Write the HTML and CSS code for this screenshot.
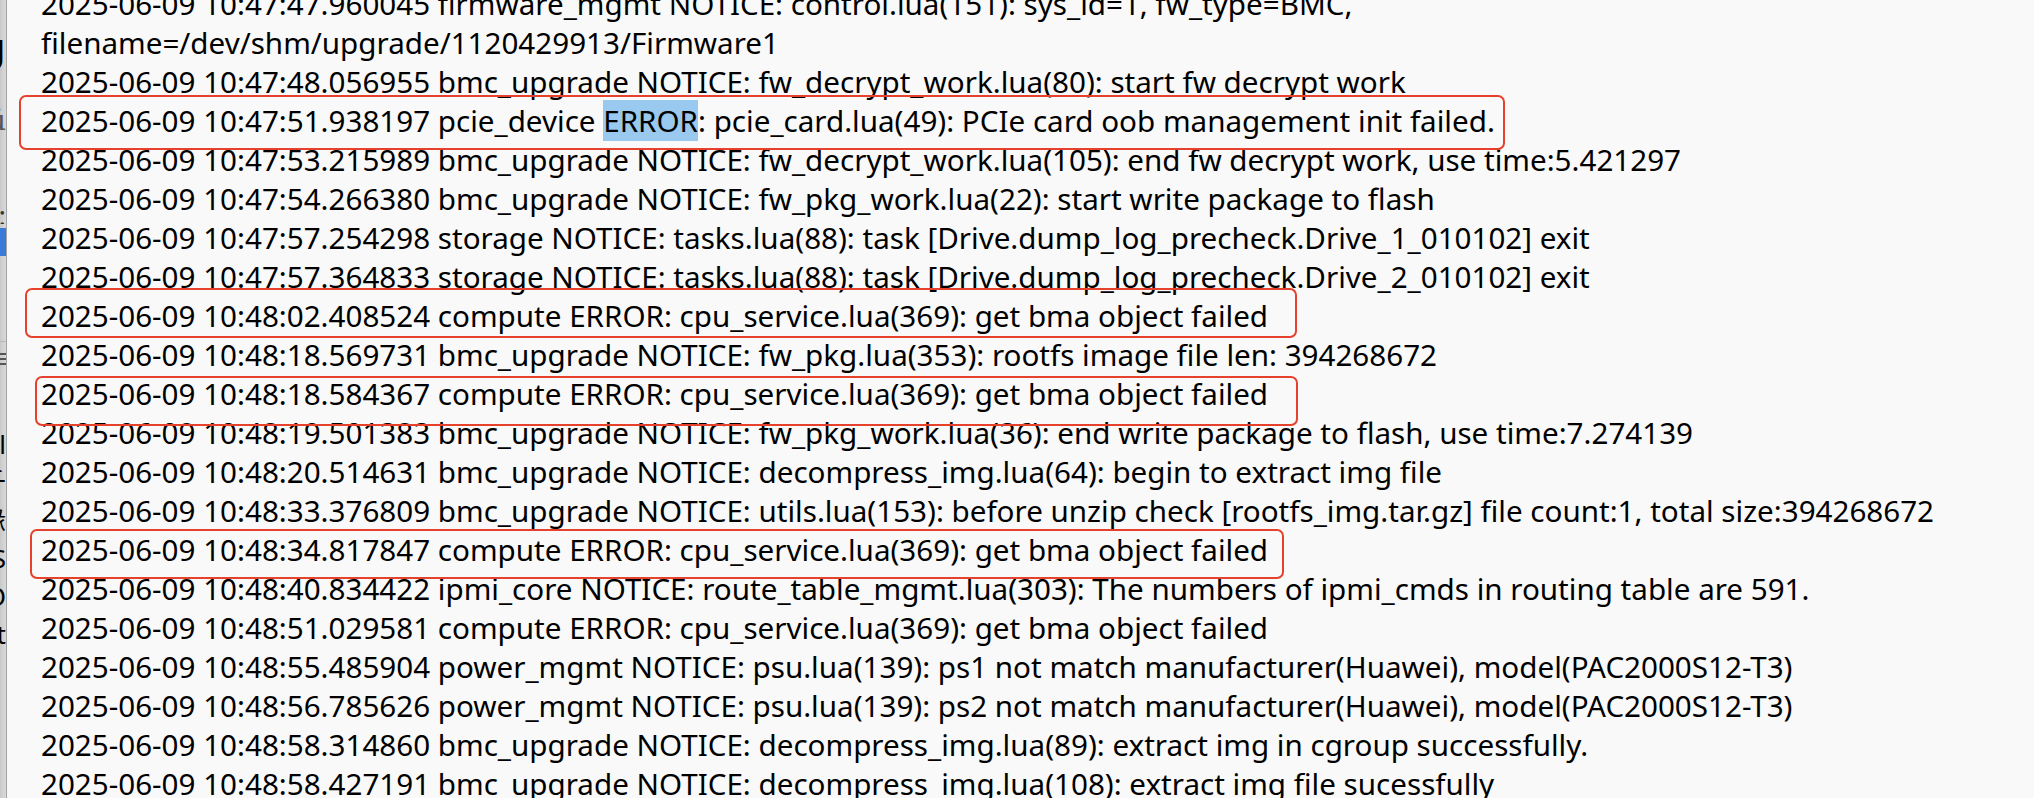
FILE: index.html
```html
<!DOCTYPE html>
<html lang="zh-CN">
  <head>
    <meta charset="UTF-8" />
    <meta name="viewport" content="width=device-width, initial-scale=1.0" />
    <title>日志查看</title>
    <link rel="stylesheet" href="styles.css">
  </head>
  <body>
    <div class="sidebar">
      <div class="side-item big">升级U</div>
      <div class="side-item grey">设置ü</div>
      <div class="side-item dark">日志o:</div>
      <div class="side-item active"></div>
      <div class="side-rule"></div>
      <div class="side-menu"><span></span><span></span><span></span></div>
      <div class="side-item list">升级l</div>
      <div class="side-item list">设置千</div>
      <div class="side-item list">边缘</div>
      <div class="side-item list">BMCS</div>
      <div class="side-item list">IPMIO</div>
      <div class="side-item list">Logt</div>
    </div>

    <div class="viewer">
      <div class="log">
        <div class="line">2025-06-09 10:47:47.960045 firmware_mgmt NOTICE: control.lua(151): sys_id=1, fw_type=BMC, filename=/dev/shm/upgrade/1120429913/Firmware1</div>
        <div class="line">2025-06-09 10:47:48.056955 bmc_upgrade NOTICE: fw_decrypt_work.lua(80): start fw decrypt work</div>
        <div class="line">2025-06-09 10:47:51.938197 pcie_device <span class="sel">ERROR</span>: pcie_card.lua(49): PCIe card oob management init failed.</div>
        <div class="line">2025-06-09 10:47:53.215989 bmc_upgrade NOTICE: fw_decrypt_work.lua(105): end fw decrypt work, use time:5.421297</div>
        <div class="line">2025-06-09 10:47:54.266380 bmc_upgrade NOTICE: fw_pkg_work.lua(22): start write package to flash</div>
        <div class="line">2025-06-09 10:47:57.254298 storage NOTICE: tasks.lua(88): task [Drive.dump_log_precheck.Drive_1_010102] exit</div>
        <div class="line">2025-06-09 10:47:57.364833 storage NOTICE: tasks.lua(88): task [Drive.dump_log_precheck.Drive_2_010102] exit</div>
        <div class="line">2025-06-09 10:48:02.408524 compute ERROR: cpu_service.lua(369): get bma object failed</div>
        <div class="line">2025-06-09 10:48:18.569731 bmc_upgrade NOTICE: fw_pkg.lua(353): rootfs image file len: 394268672</div>
        <div class="line">2025-06-09 10:48:18.584367 compute ERROR: cpu_service.lua(369): get bma object failed</div>
        <div class="line">2025-06-09 10:48:19.501383 bmc_upgrade NOTICE: fw_pkg_work.lua(36): end write package to flash, use time:7.274139</div>
        <div class="line">2025-06-09 10:48:20.514631 bmc_upgrade NOTICE: decompress_img.lua(64): begin to extract img file</div>
        <div class="line">2025-06-09 10:48:33.376809 bmc_upgrade NOTICE: utils.lua(153): before unzip check [rootfs_img.tar.gz] file count:1, total size:394268672</div>
        <div class="line">2025-06-09 10:48:34.817847 compute ERROR: cpu_service.lua(369): get bma object failed</div>
        <div class="line">2025-06-09 10:48:40.834422 ipmi_core NOTICE: route_table_mgmt.lua(303): The numbers of ipmi_cmds in routing table are 591.</div>
        <div class="line">2025-06-09 10:48:51.029581 compute ERROR: cpu_service.lua(369): get bma object failed</div>
        <div class="line">2025-06-09 10:48:55.485904 power_mgmt NOTICE: psu.lua(139): ps1 not match manufacturer(Huawei), model(PAC2000S12-T3)</div>
        <div class="line">2025-06-09 10:48:56.785626 power_mgmt NOTICE: psu.lua(139): ps2 not match manufacturer(Huawei), model(PAC2000S12-T3)</div>
        <div class="line">2025-06-09 10:48:58.314860 bmc_upgrade NOTICE: decompress_img.lua(89): extract img in cgroup successfully.</div>
        <div class="line">2025-06-09 10:48:58.427191 bmc_upgrade NOTICE: decompress_img.lua(108): extract img file sucessfully</div>
      </div>

      <!-- hand drawn marks around the errors -->
      <div class="mark mark-1"></div>
      <div class="mark mark-2"></div>
      <div class="mark mark-3"></div>
      <div class="mark mark-4"></div>
    </div>
  </body>
</html>
```

FILE: styles.css
```css
* {
  margin: 0;
  padding: 0;
  box-sizing: border-box;
}

html,
body {
  height: 100%;
  overflow: hidden;
}

body {
  display: flex;
  background-color: #f9f9f9;
  font-family: "Noto Sans", "Noto Sans CJK SC", sans-serif;
  color: #000;
}

.sidebar {
  flex: 0 0 7px;
  display: flex;
  flex-direction: column;
  overflow: hidden;
  background: linear-gradient(to right, #c9c9c9, #d9d9d9);
  border-right: 1px solid #a2a2a2;
}

.side-item {
  display: flex;
  justify-content: flex-end;
  white-space: nowrap;
  font-size: 28px;
  line-height: 30px;
}

.side-item.big {
  height: 48px;
  margin-top: 32px;
  font-size: 44px;
  font-weight: bold;
  line-height: 46px;
}

.side-item.grey {
  height: 36px;
  margin-top: 26px;
  color: #555;
  font-family: "DejaVu Serif", serif;
}

.side-item.dark {
  height: 20px;
  margin-top: 62px;
  line-height: 22px;
  overflow: hidden;
  color: #333;
}

.side-item.active {
  height: 28px;
  margin-top: 4px;
  background-color: #3a7bd9;
}

.side-rule {
  height: 1px;
  margin-top: 85px;
  background-color: #b9b9b9;
}

.side-menu {
  display: flex;
  flex-direction: column;
  gap: 3px;
  margin-top: 11px;
}

.side-menu span {
  height: 2px;
  background-color: #555;
}

.side-item.list {
  height: 38px;
  line-height: 38px;
  font-size: 26px;
}

.sidebar .side-menu + .side-item {
  margin-top: 60px;
}

.viewer {
  position: relative;
  flex: 1;
  min-width: 0;
  padding: 0 30px 0 34px;
}

.log {
  margin-top: -16px;
  font-size: 29.6px;
  line-height: 39px;
}

.line {
  white-space: pre-wrap;
}

.sel {
  background-color: #99c9ef;
}

.mark {
  position: absolute;
  border: 2px solid #e5412d;
  border-radius: 7px;
  pointer-events: none;
}

.mark-1 {
  left: 12px;
  top: 95px;
  width: 1486px;
  height: 55px;
}

.mark-2 {
  left: 18px;
  top: 288px;
  width: 1272px;
  height: 50px;
}

.mark-3 {
  left: 28px;
  top: 376px;
  width: 1263px;
  height: 50px;
}

.mark-4 {
  left: 23px;
  top: 529px;
  width: 1254px;
  height: 50px;
}
```
